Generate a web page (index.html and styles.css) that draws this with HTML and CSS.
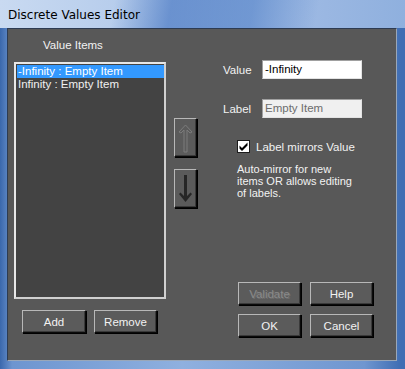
FILE: index.html
```html
<!DOCTYPE html>
<html lang="en">
<head>
    <meta charset="UTF-8">
    <title>Discrete Values Editor</title>
    <link rel="stylesheet" href="styles.css">
</head>
<body>

<div class="window">
    <div class="titlebar">Discrete Values Editor</div>
    <div class="client">
        <div class="col-list">
            <div class="group-label">Value Items</div>
            <div class="listbox">
                <div class="item selected">-Infinity : Empty Item</div>
                <div class="item">Infinity : Empty Item</div>
            </div>
            <div class="btn-row">
                <button class="btn">Add</button>
                <button class="btn">Remove</button>
            </div>
        </div>

        <div class="col-move">
            <button class="btn arrow disabled">
                <svg width="15" height="30" viewBox="0 0 15 30">
                    <path d="M7.5 2 L14 9 L12 10 L9 7 L9 29 L6 29 L6 7 L3 10 L1 9 Z" fill="none" stroke="#7c7c7c" stroke-width="1"/>
                </svg>
            </button>
            <button class="btn arrow">
                <svg width="15" height="30" viewBox="0 0 15 30">
                    <path d="M6 1 L9 1 L9 22 L12.5 18.5 L14 20 L7.5 28 L1 20 L2.5 18.5 L6 22 Z" fill="#262626"/>
                </svg>
            </button>
        </div>

        <div class="col-edit">
            <div class="field">
                <span class="field-label">Value</span>
                <span class="input">-Infinity</span>
            </div>
            <div class="field">
                <span class="field-label">Label</span>
                <span class="input readonly">Empty Item</span>
            </div>
            <div class="check">
                <span class="box">
                    <svg width="11" height="11" viewBox="0 0 11 11">
                        <path d="M1.5 4.5 L4 7 L9.5 1.5 L9.5 4.5 L4 10 L1.5 7.5 Z" fill="#000"/>
                    </svg>
                </span>
                <span>Label mirrors Value</span>
            </div>
            <div class="hint">Auto-mirror for new<br>items OR allows editing<br>of labels.</div>
            <div class="btn-grid">
                <button class="btn disabled">Validate</button>
                <button class="btn">Help</button>
                <button class="btn">OK</button>
                <button class="btn">Cancel</button>
            </div>
        </div>
    </div>
</div>

</body>
</html>
```

FILE: styles.css
```css
* {
    box-sizing: border-box;
}
body {
    margin: 0;
    width: 405px;
    height: 369px;
    overflow: hidden;
    font-family: "Liberation Sans", Arial, sans-serif;
    font-size: 11.5px;
}
.window {
    width: 405px;
    height: 369px;
    padding: 0 8px 8px 7px;
    display: flex;
    flex-direction: column;
    background: linear-gradient(90deg, #3a68ad 0%, #6d95d0 3%, #8fb0df 45%, #6f96d0 90%, #3f6db3 99%);
}
.titlebar {
    height: 28px;
    margin: 0 -8px 0 -7px;
    padding: 8px 0 0 8px;
    color: #000;
    font-family: "DejaVu Sans", sans-serif;
    font-size: 12px;
    background:
        linear-gradient(100deg, rgba(255,255,255,0) 28%, rgba(60,110,190,0.6) 42%, rgba(70,120,195,0.55) 62%, rgba(255,255,255,0) 78%),
        linear-gradient(90deg, #c9daf1 0%, #b0c8ea 40%, #9db9e3 75%, #8fb0de 100%);
}
.client {
    flex: 1;
    display: flex;
    background: #585858;
    border: 1px solid #2d3b52;
    border-right-color: #9aa7b8;
    border-bottom-color: #9aa7b8;
    color: #f2f2f2;
}
.col-list {
    width: 158px;
    padding-left: 6px;
}
.group-label {
    margin-top: 9px;
    padding-left: 29px;
    line-height: 14px;
}
.listbox {
    margin-top: 10px;
    width: 152px;
    height: 237px;
    background: #434343;
    border: 2px solid #e8e8e8;
    border-right-color: #d0d0d0;
    border-bottom-color: #d0d0d0;
    padding: 1px 0 0 1px;
}
.item {
    height: 13px;
    line-height: 13px;
    padding-left: 1px;
    color: #f0f0f0;
}
.item.selected {
    background: #3399ff;
    color: #fff;
}
.btn-row {
    margin-top: 11px;
    display: flex;
    gap: 8px;
    padding-left: 8px;
}
.btn {
    width: 63px;
    height: 23px;
    padding: 0;
    background: #5b5b5b;
    color: #f2f2f2;
    font-family: "Liberation Sans", Arial, sans-serif;
    font-size: 11.5px;
    border: 1px solid #0a0a0a;
    border-top-color: #b8b8b8;
    border-left-color: #b8b8b8;
    box-shadow: inset -1px -1px 0 #3a3a3a, 1px 1px 0 #000;
}
.btn-row .btn:first-child {
    width: 64px;
}
.btn.disabled {
    color: #8a8a8a;
    text-shadow: 1px 1px 0 #6e6e6e;
}
.col-move {
    width: 23px;
    margin-left: 8px;
    padding-top: 89px;
    display: flex;
    flex-direction: column;
    gap: 12px;
}
.arrow {
    width: 23px;
    height: 39px;
    display: flex;
    align-items: center;
    justify-content: center;
}
.arrow svg {
    display: block;
}
.col-edit {
    margin-left: 26px;
    padding-top: 31px;
    display: flex;
    flex-direction: column;
}
.field {
    display: flex;
    align-items: center;
    height: 19px;
    margin-bottom: 20px;
}
.field-label {
    width: 39px;
}
.input {
    width: 100px;
    height: 19px;
    line-height: 16px;
    padding-left: 2px;
    background: #fff;
    color: #000;
    border: 1px solid #a0a0a0;
    border-bottom-color: #e3e3e3;
    border-right-color: #e3e3e3;
}
.input.readonly {
    background: #f0f0f0;
    color: #6d6d6d;
}
.check {
    margin-top: 2px;
    margin-left: 14px;
    display: flex;
    align-items: center;
    gap: 6px;
}
.box {
    width: 13px;
    height: 13px;
    background: #fff;
    border: 1px solid #1c1c1c;
    display: flex;
    align-items: center;
    justify-content: center;
}
.hint {
    margin-top: 10px;
    margin-left: 14px;
    font-size: 11px;
    line-height: 12px;
}
.btn-grid {
    margin-top: 83px;
    margin-left: 15px;
    display: grid;
    grid-template-columns: 63px 63px;
    column-gap: 9px;
    row-gap: 9px;
}
```
